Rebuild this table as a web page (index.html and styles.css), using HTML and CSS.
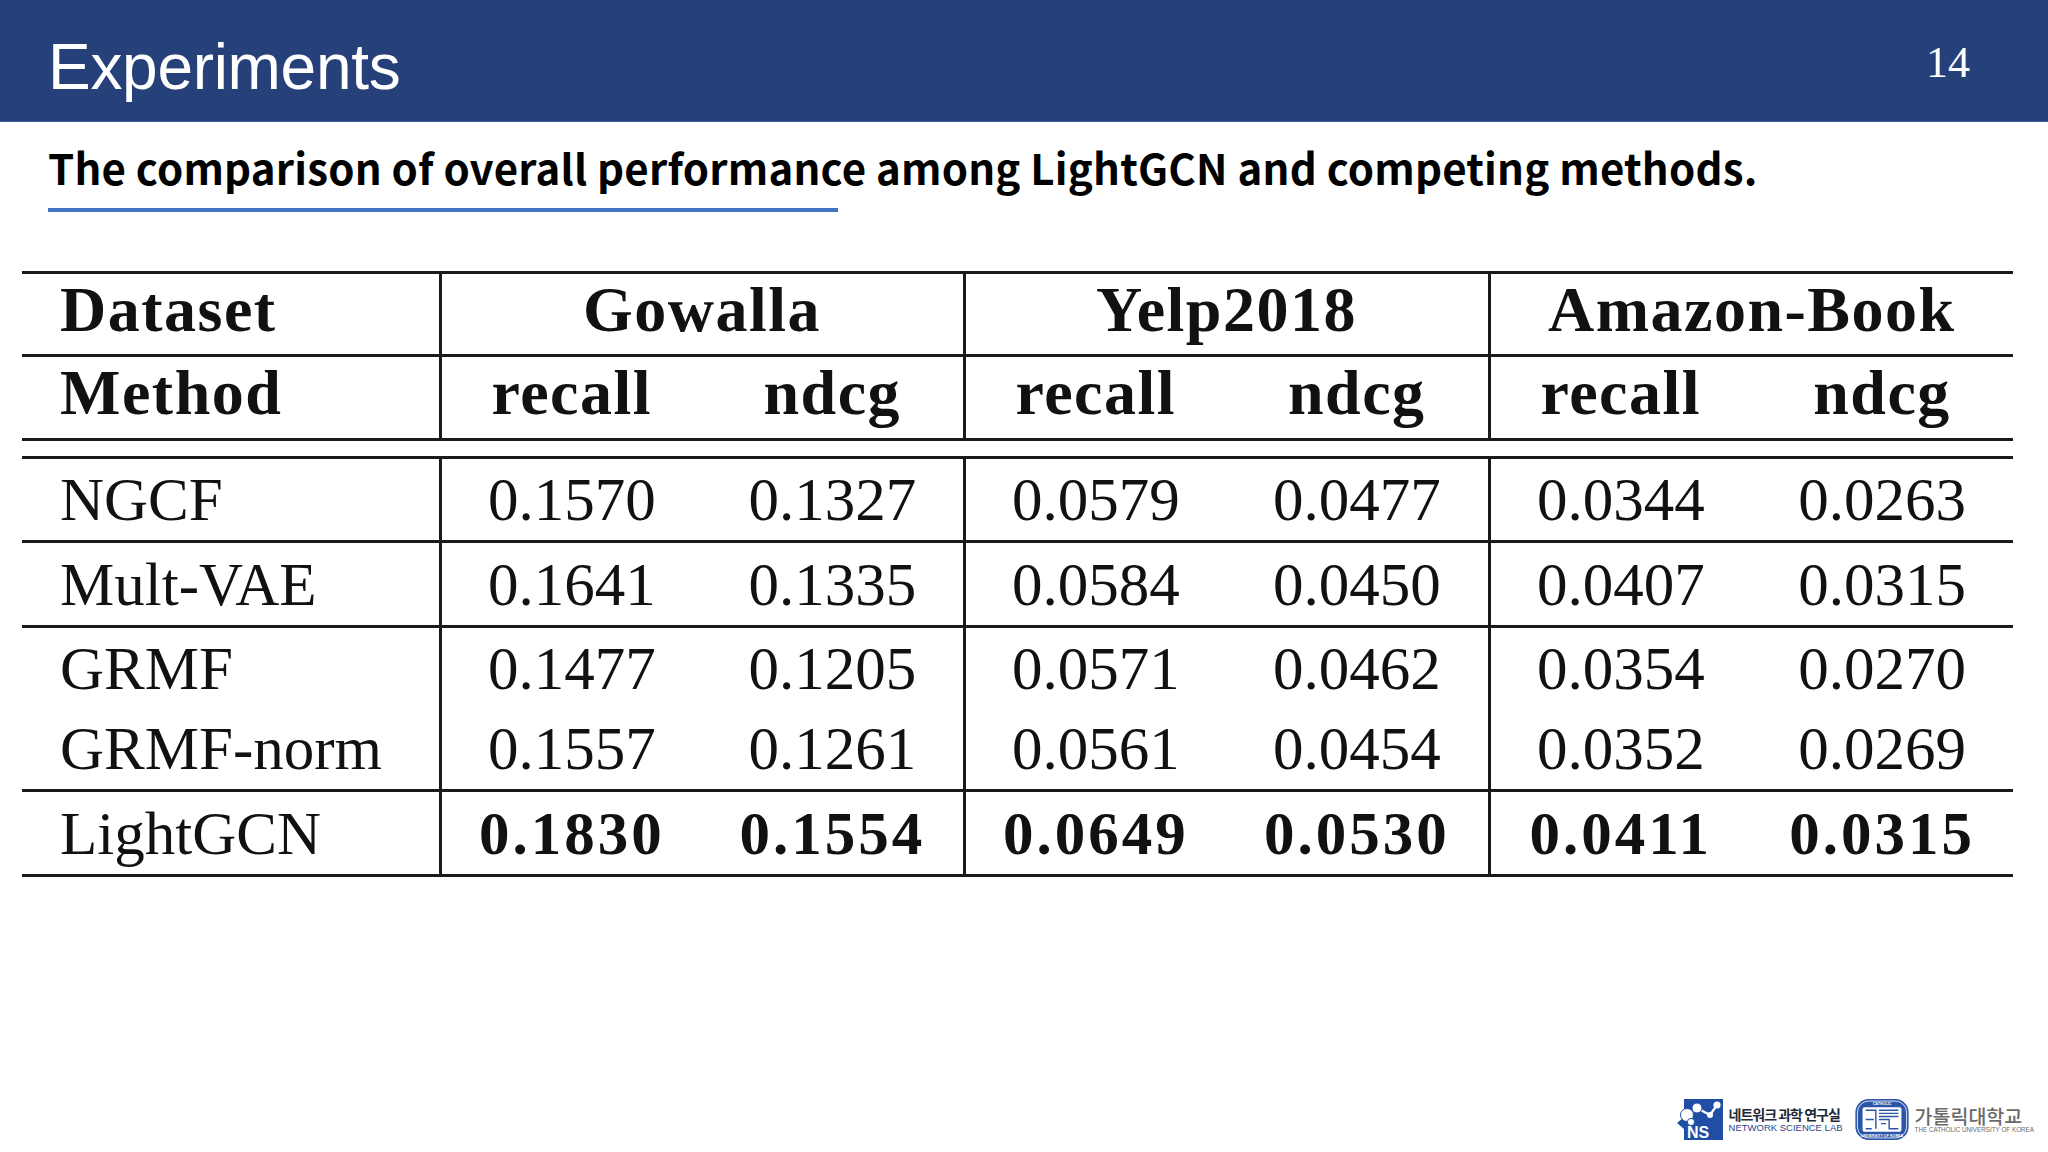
FILE: index.html
```html
<!DOCTYPE html>
<html lang="en">
<head>
<meta charset="utf-8">
<title>Experiments</title>
<link rel="stylesheet" href="styles.css">
</head>
<body>
<div class="slide">
  <header class="topbar">
    <h1 class="title">Experiments</h1>
    <span class="page-num">14</span>
  </header>

  <section class="content">
    <h2 class="subtitle">The comparison of overall performance among LightGCN and competing methods.</h2>
    <div class="underline"></div>

    <table class="results">
      <colgroup>
        <col class="c-method">
        <col class="c-sub"><col class="c-sub">
        <col class="c-sub"><col class="c-sub-w">
        <col class="c-sub"><col class="c-sub">
      </colgroup>
      <tr class="row-h">
        <th class="name sep">Dataset</th>
        <th colspan="2" class="sep">Gowalla</th>
        <th colspan="2" class="sep">Yelp2018</th>
        <th colspan="2">Amazon-Book</th>
      </tr>
      <tr class="row-h2">
        <th class="name sep">Method</th>
        <th>recall</th><th class="sep">ndcg</th>
        <th>recall</th><th class="sep">ndcg</th>
        <th>recall</th><th>ndcg</th>
      </tr>
      <tr class="row-gap"><td colspan="7"></td></tr>
      <tr class="row-d line">
        <td class="name sep">NGCF</td>
        <td>0.1570</td><td class="sep">0.1327</td>
        <td>0.0579</td><td class="sep">0.0477</td>
        <td>0.0344</td><td>0.0263</td>
      </tr>
      <tr class="row-d2 line">
        <td class="name sep">Mult-VAE</td>
        <td>0.1641</td><td class="sep">0.1335</td>
        <td>0.0584</td><td class="sep">0.0450</td>
        <td>0.0407</td><td>0.0315</td>
      </tr>
      <tr class="row-d3">
        <td class="name sep">GRMF</td>
        <td>0.1477</td><td class="sep">0.1205</td>
        <td>0.0571</td><td class="sep">0.0462</td>
        <td>0.0354</td><td>0.0270</td>
      </tr>
      <tr class="row-d3 line">
        <td class="name sep">GRMF-norm</td>
        <td>0.1557</td><td class="sep">0.1261</td>
        <td>0.0561</td><td class="sep">0.0454</td>
        <td>0.0352</td><td>0.0269</td>
      </tr>
      <tr class="row-d2 line best">
        <td class="name sep">LightGCN</td>
        <td>0.1830</td><td class="sep">0.1554</td>
        <td>0.0649</td><td class="sep">0.0530</td>
        <td>0.0411</td><td>0.0315</td>
      </tr>
    </table>
  </section>

  <footer class="logos">
    <div class="logo ns">
      <svg class="ns-mark" width="48" height="43" viewBox="0 0 48 43">
        <path d="M8 1 H47 V42 H8 V31 L1 25 L8 19 Z" fill="#1f4fa5"/>
        <path d="M13 16 L21 10 L34 17 L41 7" stroke="#ffffff" stroke-width="2.2" fill="none"/>
        <circle cx="11" cy="17" r="6.5" fill="#ffffff" stroke="#1f4fa5" stroke-width="1"/>
        <circle cx="21" cy="10" r="5" fill="#ffffff" stroke="#1f4fa5" stroke-width="1"/>
        <circle cx="15" cy="24" r="3.6" fill="#ffffff" stroke="#1f4fa5" stroke-width="1"/>
        <circle cx="34" cy="17" r="3" fill="#ffffff"/>
        <circle cx="41" cy="7" r="3.6" fill="#ffffff"/>
        <text x="11" y="40" class="ns-letters">NS</text>
      </svg>
      <div class="logo-text">
        <span class="ns-ko">네트워크 과학 연구실</span>
        <span class="ns-en">NETWORK SCIENCE LAB</span>
      </div>
    </div>
    <div class="logo cuk">
      <svg class="cuk-mark" width="56" height="43" viewBox="0 0 54 42">
        <rect x="1" y="1" width="52" height="40" rx="13" fill="#2a55a8"/>
        <rect x="3" y="3" width="48" height="36" rx="11" fill="none" stroke="#ffffff" stroke-width="0.8"/>
        <rect x="8" y="9" width="38" height="24" rx="2" fill="#ffffff"/>
        <path d="M11 12 H21 V30 M11 21 H19 M24 12 H43 M24 15 H43 M24 18 H43 M24 21 H34 V30 H43 M11 30 H17 M26 25 H31" stroke="#2a55a8" stroke-width="1.4" fill="none"/>
        <text x="27" y="7.3" class="cuk-arc">CATHOLIC</text>
        <text x="27" y="38" class="cuk-arc">UNIVERSITY OF KOREA</text>
      </svg>
      <div class="logo-text">
        <span class="cuk-ko">가톨릭대학교</span>
        <span class="cuk-en">THE CATHOLIC UNIVERSITY OF KOREA</span>
      </div>
    </div>
  </footer>
</div>
</body>
</html>
```

FILE: styles.css
```css
html, body {
  margin: 0;
  padding: 0;
  background: #ffffff;
}

.slide {
  width: 2048px;
  height: 1152px;
  display: flex;
  flex-direction: column;
  background: #ffffff;
  overflow: hidden;
}

/* ---------- top bar ---------- */
.topbar {
  height: 122px;
  flex: none;
  background: #26417a;
  border-bottom: 1px solid #3d5c96;
  display: flex;
  align-items: flex-start;
  justify-content: space-between;
  padding: 35px 78px 0 48px;
  box-sizing: border-box;
}

.title {
  margin: 0;
  font-family: "Liberation Sans", Arial, sans-serif;
  font-weight: 400;
  font-size: 64px;
  line-height: 65px;
  color: #ffffff;
  letter-spacing: -0.3px;
}

.page-num {
  margin-top: 6px;
  font-family: "Liberation Serif", "Times New Roman", serif;
  font-size: 44px;
  line-height: 44px;
  color: #ffffff;
}

/* ---------- content ---------- */
.content {
  display: flex;
  flex-direction: column;
  align-items: flex-start;
}

.subtitle {
  margin: 24px 0 0 48px;
  font-family: "Noto Sans CJK KR", "Noto Sans", sans-serif;
  font-weight: 700;
  font-size: 42px;
  line-height: 41px;
  letter-spacing: 0.2px;
  color: #000000;
  white-space: nowrap;
}

.underline {
  margin: 21px 0 0 48px;
  width: 790px;
  height: 4px;
  background: #4472c4;
}

/* ---------- table ---------- */
.results {
  margin: 59px 0 0 22px;
  width: 1991px;
  border-collapse: collapse;
  table-layout: fixed;
  font-family: "Liberation Serif", "Times New Roman", serif;
  font-size: 61px;
  color: #111111;
  border-top: 3px solid #1a1a1a;
  border-bottom: 3px solid #1a1a1a;
}

.c-method { width: 418px; }
.c-sub { width: 262px; }
.c-sub-w { width: 263px; }

.results th,
.results td {
  padding: 0;
  text-align: center;
  vertical-align: middle;
  line-height: 61px;
  white-space: nowrap;
}

.results th {
  font-weight: 700;
  font-size: 64px;
  letter-spacing: 1.5px;
  padding-bottom: 10px;
}

.results .name {
  text-align: left;
  padding-left: 38px;
}

.results .sep {
  border-right: 3px solid #1a1a1a;
}

.row-h { height: 83px; }
.row-h th { border-bottom: 3px solid #1a1a1a; }

.row-h2 { height: 84px; }
.row-h2 th { border-bottom: 3px solid #1a1a1a; }

.row-gap { height: 18px; }
.row-gap td { border-bottom: 3px solid #1a1a1a; }

.row-d { height: 84px; }
.row-d2 { height: 85px; }
.row-d3 { height: 82px; }

.line td { border-bottom: 3px solid #1a1a1a; }

.best td:not(.name) {
  font-weight: 700;
  letter-spacing: 3px;
}

/* ---------- footer logos ---------- */
.logos {
  margin-top: auto;
  display: flex;
  justify-content: flex-end;
  align-items: center;
  gap: 11px;
  padding: 0 14px 11px 0;
}

.logo {
  display: flex;
  align-items: center;
  gap: 5px;
}

.logo-text {
  display: flex;
  flex-direction: column;
}

.ns-letters {
  font-family: "Liberation Sans", Arial, sans-serif;
  font-weight: 700;
  font-size: 16px;
  fill: #ffffff;
}

.ns-ko {
  font-family: "Noto Sans CJK KR", sans-serif;
  font-weight: 700;
  font-size: 14px;
  line-height: 16px;
  letter-spacing: -1px;
  color: #222a3a;
}

.ns-en {
  font-family: "Liberation Sans", Arial, sans-serif;
  font-size: 9.5px;
  line-height: 12px;
  color: #1f4690;
}

.cuk-arc {
  font-family: "Liberation Sans", Arial, sans-serif;
  font-size: 3.6px;
  font-weight: 700;
  fill: #ffffff;
  text-anchor: middle;
}

.cuk-ko {
  font-family: "Noto Sans CJK KR", sans-serif;
  font-weight: 500;
  font-size: 19.5px;
  line-height: 21px;
  letter-spacing: 0;
  color: #6a6a6a;
}

.cuk-en {
  font-family: "Liberation Sans", Arial, sans-serif;
  font-size: 6.3px;
  line-height: 8px;
  color: #6a6a6a;
}
```
